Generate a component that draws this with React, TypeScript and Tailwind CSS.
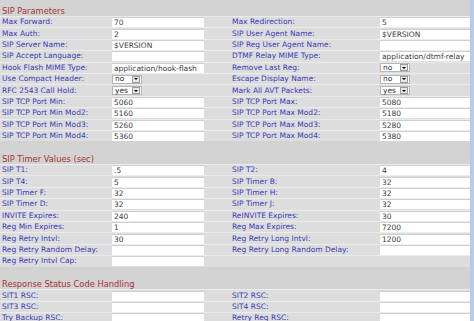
import React from 'react';

type Field = { label: string; value?: string; select?: boolean } | null;
type Row = [Field, Field];

const font = { fontFamily: 'Verdana, "DejaVu Sans", sans-serif' };

function Select({ value }: { value: string }) {
  return (
    <div className="flex h-[9px] w-[30px] items-center border border-[#b5b5b5] bg-white pl-[2px] text-[#333]">
      <span className="flex-1 leading-none">{value}</span>
      <span className="mr-[1px] flex h-[7px] w-[8px] items-center justify-center border border-[#9a9a9a] bg-[#e8e8e8]">
        <span className="block h-0 w-0 border-x-[2px] border-t-[2px] border-x-transparent border-t-black" />
      </span>
    </div>
  );
}

function Cell({ f, inputWidth }: { f: Field; inputWidth: string }) {
  if (!f) {
    return (
      <>
        <div />
        <div />
      </>
    );
  }
  return (
    <>
      <div className="truncate pl-[2px] leading-[10px] text-[#3a3ab8]">{f.label}</div>
      <div className="flex items-center">
        {f.select ? (
          <Select value={f.value ?? ''} />
        ) : (
          <div className={`h-[10px] ${inputWidth} border-t border-[#cfcfcf] bg-white pl-[2px] leading-[9px] text-[#3c3c3c]`}>
            {f.value}
          </div>
        )}
      </div>
    </>
  );
}

function DataRow({ row }: { row: Row }) {
  return (
    <div className="grid h-[11.4px] grid-cols-[112px_92px_26px_150px_90px] items-center border-t border-[#ececec] bg-[#dddddd]">
      <Cell f={row[0]} inputWidth="w-[92px]" />
      <div />
      <Cell f={row[1]} inputWidth="w-[90px]" />
    </div>
  );
}

function Title({ text }: { text?: string }) {
  return (
    <div className="h-[11.4px] bg-[#d3d3d3] pl-[2px] text-[8.3px] leading-[12px] text-[#a83232]">{text}</div>
  );
}

const sip: Row[] = [
  [{ label: 'Max Forward:', value: '70' }, { label: 'Max Redirection:', value: '5' }],
  [{ label: 'Max Auth:', value: '2' }, { label: 'SIP User Agent Name:', value: '$VERSION' }],
  [{ label: 'SIP Server Name:', value: '$VERSION' }, { label: 'SIP Reg User Agent Name:', value: '' }],
  [{ label: 'SIP Accept Language:', value: '' }, { label: 'DTMF Relay MIME Type:', value: 'application/dtmf-relay' }],
  [{ label: 'Hook Flash MIME Type:', value: 'application/hook-flash' }, { label: 'Remove Last Reg:', value: 'no', select: true }],
  [{ label: 'Use Compact Header:', value: 'no', select: true }, { label: 'Escape Display Name:', value: 'no', select: true }],
  [{ label: 'RFC 2543 Call Hold:', value: 'yes', select: true }, { label: 'Mark All AVT Packets:', value: 'yes', select: true }],
  [{ label: 'SIP TCP Port Min:', value: '5060' }, { label: 'SIP TCP Port Max:', value: '5080' }],
  [{ label: 'SIP TCP Port Min Mod2:', value: '5160' }, { label: 'SIP TCP Port Max Mod2:', value: '5180' }],
  [{ label: 'SIP TCP Port Min Mod3:', value: '5260' }, { label: 'SIP TCP Port Max Mod3:', value: '5280' }],
  [{ label: 'SIP TCP Port Min Mod4:', value: '5360' }, { label: 'SIP TCP Port Max Mod4:', value: '5380' }],
];

const timers: Row[] = [
  [{ label: 'SIP T1:', value: '.5' }, { label: 'SIP T2:', value: '4' }],
  [{ label: 'SIP T4:', value: '5' }, { label: 'SIP Timer B:', value: '32' }],
  [{ label: 'SIP Timer F:', value: '32' }, { label: 'SIP Timer H:', value: '32' }],
  [{ label: 'SIP Timer D:', value: '32' }, { label: 'SIP Timer J:', value: '32' }],
  [{ label: 'INVITE Expires:', value: '240' }, { label: 'ReINVITE Expires:', value: '30' }],
  [{ label: 'Reg Min Expires:', value: '1' }, { label: 'Reg Max Expires:', value: '7200' }],
  [{ label: 'Reg Retry Intvl:', value: '30' }, { label: 'Reg Retry Long Intvl:', value: '1200' }],
  [{ label: 'Reg Retry Random Delay:', value: '' }, { label: 'Reg Retry Long Random Delay:', value: '' }],
  [{ label: 'Reg Retry Intvl Cap:', value: '' }, null],
];

const rsc: Row[] = [
  [{ label: 'SIT1 RSC:', value: '' }, { label: 'SIT2 RSC:', value: '' }],
  [{ label: 'SIT3 RSC:', value: '' }, { label: 'SIT4 RSC:', value: '' }],
  [{ label: 'Try Backup RSC:', value: '' }, { label: 'Retry Reg RSC:', value: '' }],
];

export default function App() {
  return (
    <div className="flex h-[321px] w-[474px] overflow-hidden bg-[#d3d3d3] text-[7.5px]" style={font}>
      <div className="w-[470px] shrink-0">
        <div className="h-[4.6px] bg-[#d3d3d3]" />
        <Title text="SIP Parameters" />
        {sip.map((r, i) => (
          <DataRow key={i} row={r} />
        ))}
        <Title />
        <Title text="SIP Timer Values (sec)" />
        {timers.map((r, i) => (
          <DataRow key={i} row={r} />
        ))}
        <Title />
        <Title text="Response Status Code Handling" />
        {rsc.map((r, i) => (
          <DataRow key={i} row={r} />
        ))}
      </div>
      <div className="w-[4px] bg-[#b7cbe6]" />
    </div>
  );
}
